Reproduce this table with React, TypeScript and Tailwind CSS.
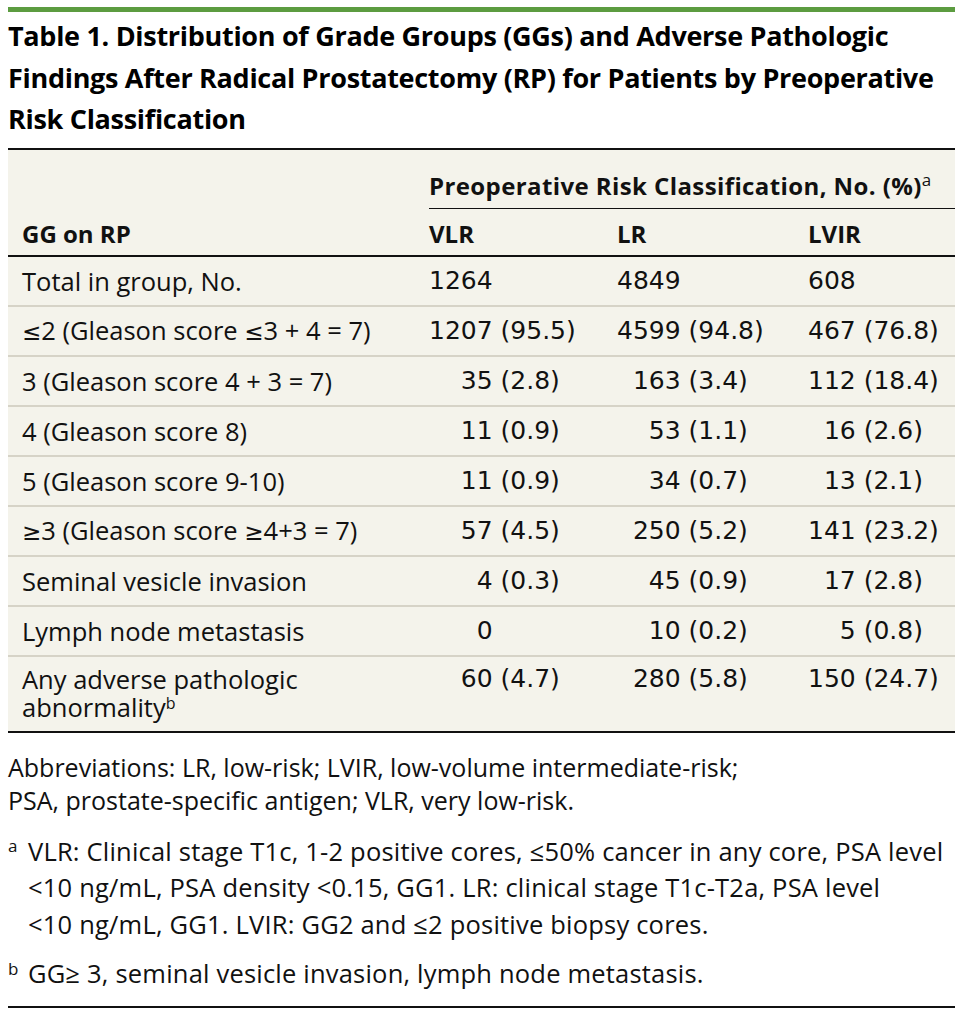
import React from "react";

const M = ({ c }: { c: string }) => <span className="font-['DejaVu_Sans',sans-serif] text-[23px]">{c}</span>;

const rows: { label: React.ReactNode; v: [string, string, string] }[] = [
  { label: "Total in group, No.", v: ["1264", "4849", "608"] },
  {
    label: (
      <>
        <M c="≤" />2 (Gleason score <M c="≤" />3 + 4 = 7)
      </>
    ),
    v: ["1207 (95.5)", "4599 (94.8)", "467 (76.8)"],
  },
  { label: "3 (Gleason score 4 + 3 = 7)", v: ["\u2007\u200735 (2.8)", "\u2007163 (3.4)", "112 (18.4)"] },
  { label: "4 (Gleason score 8)", v: ["\u2007\u200711 (0.9)", "\u2007\u200753 (1.1)", "\u200716 (2.6)"] },
  { label: "5 (Gleason score 9-10)", v: ["\u2007\u200711 (0.9)", "\u2007\u200734 (0.7)", "\u200713 (2.1)"] },
  {
    label: (
      <>
        <M c="≥" />3 (Gleason score <M c="≥" />4+3 = 7)
      </>
    ),
    v: ["\u2007\u200757 (4.5)", "\u2007250 (5.2)", "141 (23.2)"],
  },
  { label: "Seminal vesicle invasion", v: ["\u2007\u2007\u20074 (0.3)", "\u2007\u200745 (0.9)", "\u200717 (2.8)"] },
  { label: "Lymph node metastasis", v: ["\u2007\u2007\u20070", "\u2007\u200710 (0.2)", "\u2007\u20075 (0.8)"] },
];

const sans = "font-['Open_Sans','DejaVu_Sans',sans-serif]";

export default function App() {
  return (
    <div className={`w-[963px] bg-white text-[#111] ${sans}`}>
      <div className="px-[8px] pt-[7px]">
        <div className="h-[5px] bg-[#5c9c40]" />
        <h1 className="pt-[3px] text-[27px] font-bold leading-[41.5px] tracking-[-0.3px] text-black">
          Table 1. Distribution of Grade Groups (GGs) and Adverse Pathologic
          <br />
          Findings After Radical Prostatectomy (RP) for Patients by Preoperative
          <br />
          Risk Classification
        </h1>

        <div className="mt-[8px] border-t-2 border-b-2 border-[#111] bg-[#f4f3eb]">
          {/* header */}
          <div className="grid grid-cols-[407px_188px_191px_161px] border-b-2 border-[#111]">
            <div className="col-start-1 row-span-2 row-start-1 flex items-end pb-[6px] pl-[14px] text-[24px] font-bold leading-[30px]">
              GG on RP
            </div>
            <div className="col-span-3 col-start-2 row-start-1 pl-[14px] pt-[21px]">
              <div className="border-b-[1.5px] border-[#111] pb-[7px] text-[24px] font-bold leading-[30px] tracking-[0.4px]">
                Preoperative Risk Classification, No. (%)
                <sup className="text-[17px] font-normal">a</sup>
              </div>
            </div>
            {["VLR", "LR", "LVIR"].map((h) => (
              <div key={h} className="row-start-2 pb-[6px] pl-[14px] pt-[10px] text-[24px] font-bold leading-[30px]">
                {h}
              </div>
            ))}
          </div>
          {/* body */}
          {rows.map((r, i) => (
            <div
              key={i}
              className="grid h-[50px] grid-cols-[407px_188px_191px_161px] items-center border-b-2 border-[#d6d3c7]"
            >
              <div className="whitespace-nowrap pl-[14px] text-[25.5px] leading-[30px]">{r.label}</div>
              {r.v.map((v, j) => (
                <div key={j} className="whitespace-pre pl-[14px] font-['DejaVu_Sans',sans-serif] text-[25px] leading-[30px]">
                  {v}
                </div>
              ))}
            </div>
          ))}
          <div className="grid grid-cols-[407px_188px_191px_161px] items-start pb-[10px] pt-[8px]">
            <div className="pl-[14px] text-[25.5px] leading-[28px]">
              Any adverse pathologic
              <br />
              abnormality<sup className="text-[16px]">b</sup>
            </div>
            {["\u2007\u200760 (4.7)", "\u2007280 (5.8)", "150 (24.7)"].map((v, j) => (
              <div key={j} className="whitespace-pre pl-[14px] font-['DejaVu_Sans',sans-serif] text-[25px] leading-[28px]">
                {v}
              </div>
            ))}
          </div>
        </div>

        <div className="mt-[18px] text-[25px] leading-[33px]">
          Abbreviations: LR, low-risk; LVIR, low-volume intermediate-risk;
          <br />
          PSA, prostate-specific antigen; VLR, very low-risk.
        </div>

        <div className="mt-[16px] flex text-[25.5px] leading-[36.5px] tracking-[0.2px]">
          <div className="w-[20px] shrink-0">
            <sup className="text-[17px]">a</sup>
          </div>
          <div>
            VLR: Clinical stage T1c, 1-2 positive cores, ≤50% cancer in any core, PSA level
            <br />
            &lt;10 ng/mL, PSA density &lt;0.15, GG1. LR: clinical stage T1c-T2a, PSA level
            <br />
            &lt;10 ng/mL, GG1. LVIR: GG2 and ≤2 positive biopsy cores.
          </div>
        </div>

        <div className="mt-[13px] flex text-[25.5px] leading-[36.5px] tracking-[0.2px]">
          <div className="w-[20px] shrink-0">
            <sup className="text-[17px]">b</sup>
          </div>
          <div>GG≥ 3, seminal vesicle invasion, lymph node metastasis.</div>
        </div>

        <div className="mt-[14px] h-[2px] bg-[#111]" />
      </div>
    </div>
  );
}
